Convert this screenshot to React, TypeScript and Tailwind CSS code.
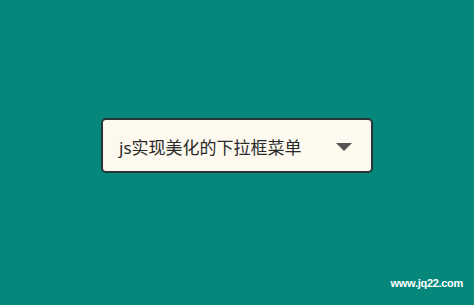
import React from 'react';

export default function App() {
  return (
    <div className="relative w-[474px] h-[305px] bg-[#05887b] overflow-hidden" style={{ fontFamily: '"Noto Sans", "Noto Sans CJK SC", sans-serif' }}>
      <div className="flex justify-center pt-[118px]">
        {/* Select box */}
        <div className="w-[272px] h-[55px] bg-[#fdf9ee] border-2 border-[#29343a] rounded-[5px] flex items-center justify-between pl-[16px] pr-[19px]">
          <span className="text-[17px] leading-none text-[#2a2a2a] mt-[3px]">js实现美化的下拉框菜单</span>
          <svg width="16" height="8" viewBox="0 0 16 8" className="mt-[2px]">
            <polygon points="0,0 16,0 8,8" fill="#555555" />
          </svg>
        </div>
      </div>

      {/* Watermark */}
      <div className="absolute right-[11px] bottom-[14px] text-white text-[11px] font-bold tracking-[-0.3px]" style={{ fontFamily: '"Liberation Sans", sans-serif' }}>
        www.jq22.com
      </div>
    </div>
  );
}
